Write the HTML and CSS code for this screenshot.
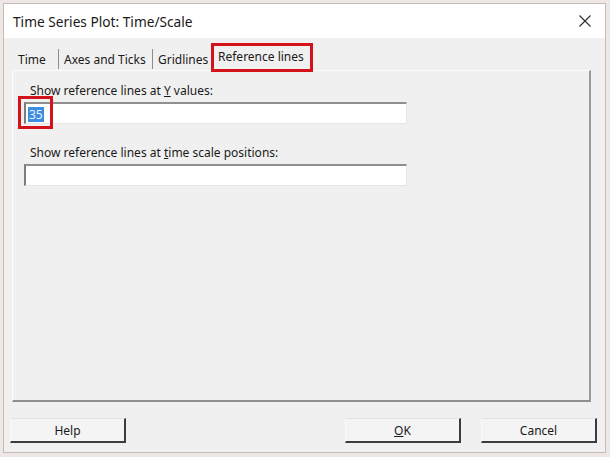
FILE: index.html
```html
<!DOCTYPE html>
<html>
<head>
<meta charset="utf-8">
<link rel="stylesheet" href="styles.css">
</head>
<body>
<div class="window">
  <div class="titlebar">
    <span class="title">Time Series Plot: Time/Scale</span>
    <span class="close">
      <svg width="12" height="12" viewBox="0 0 12 12"><path d="M0.5 0.5 L11.5 11.5 M11.5 0.5 L0.5 11.5" stroke="#2b2b2b" stroke-width="1.1" fill="none"/></svg>
    </span>
  </div>
  <div class="tabs">
    <div class="tab tab-time">Time</div>
    <div class="tab tab-axes">Axes and Ticks</div>
    <div class="tab tab-grid">Gridlines</div>
    <div class="tab tab-active">Reference lines</div>
  </div>
  <div class="panel">
    <div class="label first">Show reference lines at <u>Y</u> values:</div>
    <div class="field-wrap">
      <div class="field"><span class="sel">35</span></div>
      <div class="mark"></div>
    </div>
    <div class="label second">Show reference lines at <u>t</u>ime scale positions:</div>
    <div class="field"></div>
  </div>
  <div class="buttons">
    <div class="btn btn-help">Help</div>
    <div class="spacer"></div>
    <div class="btn btn-ok"><u>O</u>K</div>
    <div class="btn btn-cancel">Cancel</div>
  </div>
</div>
</body>
</html>
```
FILE: styles.css
```css
* { box-sizing: border-box; }
html, body { margin: 0; padding: 0; }
body {
  width: 610px;
  height: 457px;
  background: #ede8e5;
  font-family: "Noto Sans", "Open Sans", "Liberation Sans", sans-serif;
  font-size: 12px;
  color: #1a1a1a;
  padding: 3px 0 0 3px;
  overflow: hidden;
}
.window {
  width: 603px;
  height: 450px;
  border: 1px solid #c9bcb5;
  background: #f0f0f0;
  display: flex;
  flex-direction: column;
}
.titlebar {
  height: 34px;
  background: #ffffff;
  display: flex;
  align-items: center;
  padding-left: 9px;
  padding-right: 14px;
}
.title {
  flex: 1;
  font-size: 13.7px;
  color: #1a1a1a;
}
.close { display: flex; }
.tabs {
  height: 32px;
  display: flex;
  align-items: flex-start;
  padding-left: 8px;
}
.tab {
  margin-top: 11px;
  height: 20px;
  line-height: 21px;
  white-space: nowrap;
  border-right: 1px solid #8c8c8c;
}
.tab-time { width: 47px; padding-left: 6px; }
.tab-axes { width: 94px; padding-left: 5px; }
.tab-grid { width: 58px; padding-left: 5px; border-right: none; }
.tab-active {
  margin-top: 5px;
  width: 102px;
  height: 29px;
  line-height: 22px;
  padding-left: 4px;
  border: 3px solid #d3121c;
  background: #f0f0f0;
  position: relative;
  z-index: 1;
}
.panel {
  height: 332px;
  margin-left: 8px;
  margin-right: 14px;
  border-top: 1px solid #fbfbfb;
  border-left: 1px solid #fdfdfd;
  border-right: 2px solid #9a9a9a;
  border-bottom: 2px solid #8e8e8e;
  padding-top: 12px;
  padding-left: 11px;
  display: flex;
  flex-direction: column;
  align-items: flex-start;
}
.label {
  height: 16px;
  line-height: 16px;
  padding-left: 6px;
  margin-bottom: 3px;
}
.label.second { margin-top: 21px; }
.field-wrap { position: relative; }
.field {
  width: 383px;
  height: 22px;
  background: #ffffff;
  border-top: 2px solid #8f8f8f;
  border-left: 2px solid #7d7d7d;
  border-right: 1px solid #e6e6e6;
  border-bottom: 1px solid #e6e6e6;
  padding: 2px 0 0 2px;
}
.sel {
  display: inline-block;
  height: 15px;
  line-height: 15px;
  padding: 0 1px;
  background: #3d8de0;
  color: #eaf3ff;
}
.mark {
  position: absolute;
  left: -6px;
  top: -6px;
  width: 35px;
  height: 33px;
  border: 3px solid #d3121c;
}
.buttons {
  display: flex;
  margin-top: 16px;
  padding-left: 6px;
  padding-right: 8px;
}
.spacer { flex: 1; }
.btn {
  width: 116px;
  height: 25px;
  background: #f4f4f4;
  border-top: 1px solid #e2e2e2;
  border-left: 1px solid #fafafa;
  border-right: 2px solid #3c3c3c;
  border-bottom: 2px solid #3c3c3c;
  display: flex;
  align-items: center;
  justify-content: center;
}
.btn-ok { margin-right: 20px; }
```
